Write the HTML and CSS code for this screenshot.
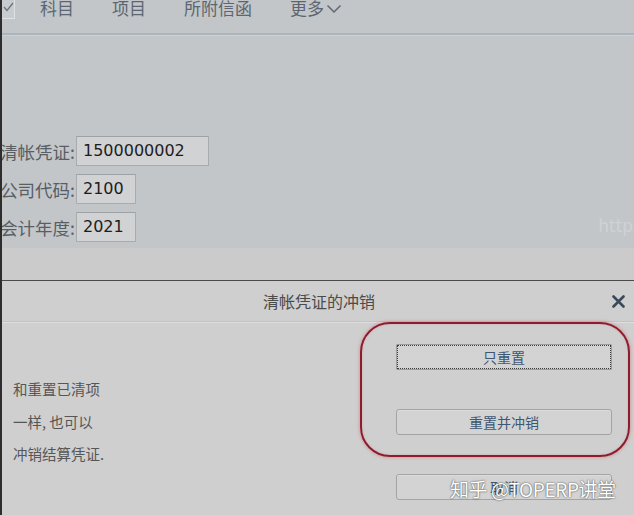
FILE: index.html
```html
<!DOCTYPE html>
<html lang="zh-CN">
<head>
<meta charset="utf-8">
<title>清帐凭证的冲销</title>
<link rel="stylesheet" href="styles.css">
</head>
<body>
<div class="screen">
  <div class="top">
    <div class="tabs">
      <div class="check"><svg width="11" height="10" viewBox="0 0 11 10"><path d="M1 5 L4 8.5 L10 1" fill="none" stroke="#6b747c" stroke-width="1.3"/></svg></div>
      <span class="tab">科目</span>
      <span class="tab">项目</span>
      <span class="tab">所附信函</span>
      <span class="tab">更多<svg class="chev" width="16" height="10" viewBox="0 0 16 10"><path d="M1.5 1.5 L8 8 L14.5 1.5" fill="none" stroke="#5d6874" stroke-width="1.5"/></svg></span>
    </div>
    <div class="form">
      <div class="row"><div class="label">清帐凭证:</div><div class="field wide">1500000002</div></div>
      <div class="row"><div class="label">公司代码:</div><div class="field">2100</div></div>
      <div class="row"><div class="label">会计年度:</div><div class="field">2021</div></div>
    </div>
    <div class="url">https</div>
  </div>
  <div class="band"></div>
  <div class="dialog">
    <div class="dlg-head">
      <span class="title">清帐凭证的冲销</span>
      <span class="close"><svg width="13" height="13" viewBox="0 0 13 13"><path d="M1.5 1.5 L11.5 11.5 M11.5 1.5 L1.5 11.5" stroke="#3b4a5a" stroke-width="2.6" stroke-linecap="round"/></svg></span>
    </div>
    <div class="dlg-body">
      <div class="desc">
        <p>和重置已清项</p>
        <p>一样, 也可以</p>
        <p>冲销结算凭证.</p>
      </div>
      <div class="actions">
        <button class="btn focus">只重置</button>
        <button class="btn">重置并冲销</button>
        <button class="btn">取消</button>
      </div>
    </div>
  </div>
  <div class="annot"></div>
  <div class="watermark">知乎 @TOPERP讲堂</div>
</div>
</body>
</html>
```

FILE: styles.css
```css
html, body {
  margin: 0;
  padding: 0;
}
body {
  width: 634px;
  height: 515px;
  overflow: hidden;
  background: #cfcfcf;
  font-family: "Noto Sans CJK SC", "Noto Sans", sans-serif;
}
.screen {
  position: relative;
  width: 632px;
  height: 515px;
  border-left: 2px solid #2d2d2d;
  overflow: hidden;
}
.top {
  position: relative;
  height: 248px;
  background: #c3c6c9;
}
.tabs {
  display: flex;
  align-items: flex-start;
  height: 33px;
  border-bottom: 2px solid #aab5c0;
  box-shadow: 0 1px 0 #cdd3d9;
}
.check {
  width: 13px;
  height: 19px;
  border-right: 1px solid #dfe2e4;
  border-bottom: 1px solid #dfe2e4;
  background: #c9ccce;
  display: flex;
  justify-content: center;
  padding-top: 2px;
  box-sizing: border-box;
}
.tab {
  margin-left: 38px;
  font-size: 17px;
  line-height: 17px;
  margin-top: -1px;
  color: #5c6672;
  display: flex;
  align-items: center;
}
.tab:first-of-type {
  margin-left: 25px;
}
.chev {
  margin-left: 2px;
  margin-top: 2px;
}
.form {
  display: flex;
  flex-direction: column;
  gap: 8px;
  margin-top: 101px;
}
.row {
  display: flex;
  align-items: center;
  height: 30px;
}
.label {
  width: 73px;
  display: flex;
  justify-content: flex-end;
  white-space: nowrap;
  font-size: 17.5px;
  color: #585e64;
  padding-right: 1px;
}
.field {
  box-sizing: border-box;
  width: 60px;
  height: 30px;
  border: 1px solid #a9acaf;
  border-top-color: #9fa2a5;
  background: #d1d2d3;
  font-family: "DejaVu Sans", sans-serif;
  font-size: 16px;
  color: #1d1d1d;
  line-height: 28px;
  padding-left: 6px;
}
.field.wide {
  width: 133px;
}
.url {
  position: absolute;
  right: -8px;
  top: 216px;
  font-family: "DejaVu Sans", sans-serif;
  font-size: 17px;
  color: #d3d6d9;
  opacity: 0.8;
}
.band {
  height: 32px;
  background: #cbcbcb;
  border-bottom: 1px solid #4b4b4b;
}
.dialog {
  background: #cfcfcf;
}
.dlg-head {
  position: relative;
  height: 40px;
  display: flex;
  align-items: center;
  justify-content: center;
  border-bottom: 1px solid #c3c3c3;
  box-shadow: 0 1px 0 #dedede;
}
.title {
  font-size: 16px;
  color: #4b4b4b;
  margin-left: 2px;
}
.close {
  position: absolute;
  right: 9px;
  top: 14px;
  display: flex;
}
.dlg-body {
  display: flex;
  justify-content: space-between;
}
.desc {
  padding-left: 11px;
  margin-top: 51px;
}
.desc p {
  margin: 0;
  font-size: 14.5px;
  line-height: 32.5px;
  color: #565656;
}
.actions {
  display: flex;
  flex-direction: column;
  gap: 39px;
  margin-top: 22px;
  margin-right: 22px;
}
.btn {
  box-sizing: border-box;
  width: 216px;
  height: 26px;
  border: 1px solid #a4a4a4;
  border-radius: 3px;
  background: #d3d3d3;
  box-shadow: inset 0 1px 0 #dcdcdc;
  font-family: "Noto Sans CJK SC", sans-serif;
  font-size: 14px;
  color: #3e5772;
  padding: 0;
}
.btn.focus {
  border-radius: 1px;
  outline: 1px dotted #3a3a3a;
  outline-offset: -2px;
  border-color: #9c9c9c;
}
.annot {
  position: absolute;
  left: 358px;
  top: 322px;
  width: 270px;
  height: 135px;
  box-sizing: border-box;
  border: 2px solid #8c1d2c;
  border-radius: 30px;
  box-shadow: 0 0 3px 1px rgba(214, 120, 132, 0.55), inset 0 0 2px rgba(214, 120, 132, 0.5);
}
.watermark {
  position: absolute;
  left: 448px;
  top: 475px;
  font-size: 19px;
  letter-spacing: -0.4px;
  color: #ffffff;
  white-space: nowrap;
  text-shadow: 0 0 2px rgba(0, 0, 0, 0.55), 0 0 1px rgba(0, 0, 0, 0.5);
}
```
